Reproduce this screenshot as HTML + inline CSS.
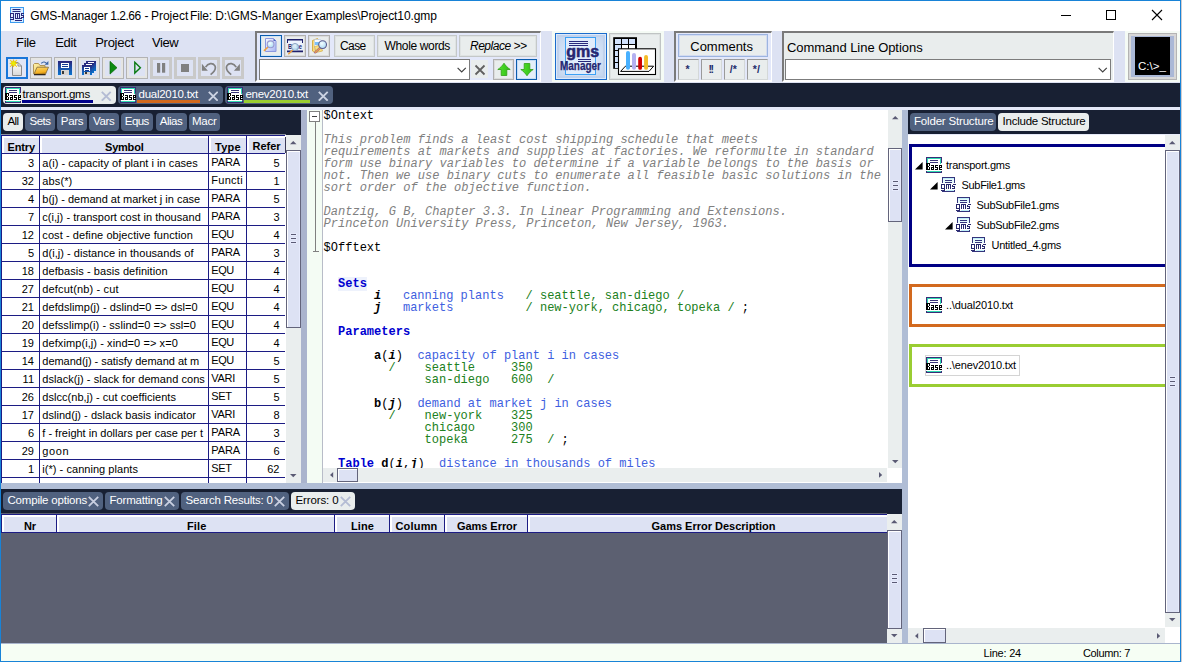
<!DOCTYPE html>
<html><head><meta charset="utf-8"><title>GMS-Manager</title>
<style>
*{box-sizing:border-box;margin:0;padding:0}
html,body{width:1182px;height:662px;overflow:hidden;background:#fff}
body{position:relative;font-family:"Liberation Sans",sans-serif;font-size:11px;color:#000}
.a{position:absolute}
.t{position:absolute;white-space:pre;line-height:1}
.btn{position:absolute;background:#e9eded;border:1px solid #c4c8c8;box-shadow:inset 0 0 0 1px #dfe3e3}
.sunk{position:absolute;background:#e9eded;border-top:2px solid #7a7a7a;border-left:2px solid #7a7a7a;border-right:1px solid #fff;border-bottom:2px solid #fff}
.tab{position:absolute;border-radius:4px;height:18px;background:#50617f;color:#fff;font-size:11px}
.tab.on{background:#e9eded;color:#000}
.hdr{position:absolute;background:#dde2f3;border-left:1px solid #fff;border-top:1px solid #fff;font-weight:bold;font-size:11px;text-align:center}
.mono{font-family:"Liberation Mono",monospace;font-size:12.02px;line-height:12px;white-space:pre;position:absolute;left:323.6px}
.c{color:#808080;font-style:italic;font-size:12.07px}
.k{color:#0000d0;font-weight:bold}
.kh{color:#0000d0;font-weight:bold;background:#eef2fc}
.d{color:#4060e0}
.g{color:#208020}
.i{font-weight:bold;font-style:italic}
.b{font-weight:bold}
</style></head>
<body>
<div class="a" style="left:0px;top:0px;width:1182px;height:662px;background:#fff;"></div>
<div class="t" style="left:30.3px;top:10.3px;font-size:12px;color:#000;letter-spacing:-0.127px;">GMS-Manager</div>
<div class="t" style="left:110.3px;top:10.3px;font-size:12px;color:#000;letter-spacing:-0.511px;">1.2.66</div>
<div class="t" style="left:144.4px;top:10.3px;font-size:12px;color:#000;letter-spacing:1.004px;">-</div>
<div class="t" style="left:151px;top:10.3px;font-size:12px;color:#000;letter-spacing:-0.021px;">Project</div>
<div class="t" style="left:190px;top:10.3px;font-size:12px;color:#000;letter-spacing:-0.174px;">File:</div>
<div class="t" style="left:215.2px;top:10.3px;font-size:12px;color:#000;letter-spacing:-0.012px;">D:\GMS-Manger</div>
<div class="t" style="left:305.3px;top:10.3px;font-size:12px;color:#000;letter-spacing:-0.086px;">Examples\Project10.gmp</div>
<div class="a" style="left:1px;top:31px;width:1179px;height:52px;background:#dde2f3;"></div>
<div class="a" style="left:1px;top:83px;width:1179px;height:24px;background:#182033;"></div>
<div class="a" style="left:1px;top:107px;width:1179px;height:3px;background:#e4e8f8;"></div>
<div class="a" style="left:1px;top:110px;width:300px;height:25px;background:#182033;"></div>
<div class="a" style="left:1px;top:643px;width:1179px;height:1px;background:#a9b5cd;"></div>
<div class="a" style="left:1px;top:644px;width:1179px;height:17px;background:#f6fef4;"></div>
<svg class="a" style="left:10px;top:7px" width="15" height="16" viewBox="0 0 15 16"><rect x="0.5" y="0.5" width="13" height="15" fill="#dcecff" stroke="#3c9cf0"/><path d="M2.5 2.5h8M2.5 4.5h8M5 11.5h7M5 13.5h7" stroke="#28287c" stroke-width="1"/><path d="M0 6h4v1h-4zM5 6h5v1h-5zM11 6h3v1h-3zM0 7h1v1h-1zM3 7h1v1h-1zM5 7h1v1h-1zM7 7h1v1h-1zM9 7h1v1h-1zM11 7h1v1h-1zM0 8h1v1h-1zM3 8h1v1h-1zM5 8h1v1h-1zM7 8h1v1h-1zM9 8h1v1h-1zM11 8h3v1h-3zM0 9h1v1h-1zM3 9h1v1h-1zM5 9h1v1h-1zM7 9h1v1h-1zM9 9h1v1h-1zM13 9h1v1h-1zM0 10h4v1h-4zM5 10h1v1h-1zM7 10h1v1h-1zM9 10h1v1h-1zM11 10h3v1h-3zM3 11h1v1h-1zM0 12h4v1h-4z" fill="#28287c" shape-rendering="crispEdges"/></svg>
<svg class="a" style="left:1055px;top:5px" width="115" height="22" viewBox="0 0 115 22" shape-rendering="crispEdges"><path d="M6 10.5h10" stroke="#000" stroke-width="1" fill="none"/><rect x="51.5" y="5.5" width="9" height="9" stroke="#000" stroke-width="1" fill="none"/><path d="M97 5l10 10M107 5l-10 10" stroke="#000" stroke-width="1.1" fill="none" shape-rendering="auto"/></svg>
<div class="t" style="left:16px;top:36px;font-size:13px;color:#000;letter-spacing:-0.312px;">File</div>
<div class="t" style="left:55.3px;top:36px;font-size:13px;color:#000;letter-spacing:-0.350px;">Edit</div>
<div class="t" style="left:95.2px;top:36px;font-size:13px;color:#000;letter-spacing:-0.266px;">Project</div>
<div class="t" style="left:152px;top:36px;font-size:13px;color:#000;letter-spacing:-0.436px;">View</div>
<div class="a" style="left:6px;top:57px;width:22px;height:22px;border:2px solid #1976d9;background:#e1e6f5"></div>
<div class="a" style="left:30px;top:57px;width:22px;height:22px;border:1px solid #b3b3b3;box-shadow:inset 0 0 0 2px #e5e5e3"></div>
<div class="a" style="left:54px;top:57px;width:22px;height:22px;border:1px solid #b3b3b3;box-shadow:inset 0 0 0 2px #e5e5e3"></div>
<div class="a" style="left:78px;top:57px;width:22px;height:22px;border:1px solid #b3b3b3;box-shadow:inset 0 0 0 2px #e5e5e3"></div>
<div class="a" style="left:102px;top:57px;width:22px;height:22px;border:1px solid #b3b3b3;box-shadow:inset 0 0 0 2px #e5e5e3"></div>
<div class="a" style="left:126px;top:57px;width:22px;height:22px;border:1px solid #b3b3b3;box-shadow:inset 0 0 0 2px #e5e5e3"></div>
<div class="a" style="left:150px;top:57px;width:22px;height:22px;border:3px solid #c9c9c9;box-shadow:inset 0 0 0 0 #ccc"></div>
<div class="a" style="left:174px;top:57px;width:22px;height:22px;border:3px solid #c9c9c9;box-shadow:inset 0 0 0 0 #ccc"></div>
<div class="a" style="left:198px;top:57px;width:22px;height:22px;border:3px solid #c9c9c9;box-shadow:inset 0 0 0 0 #ccc"></div>
<div class="a" style="left:222px;top:57px;width:22px;height:22px;border:3px solid #c9c9c9;box-shadow:inset 0 0 0 0 #ccc"></div>
<svg class="a" style="left:8px;top:59px" width="18" height="18" viewBox="0 0 18 18"><defs><linearGradient id="pg" x1="0" y1="0" x2="0" y2="1"><stop offset="0" stop-color="#fff"/><stop offset="1" stop-color="#d8d8d8"/></linearGradient></defs><path d="M4.5 3.5h5.5l3.5 3.5v9.5h-9z" fill="url(#pg)" stroke="#8c8c8c"/><path d="M10 3.5v3.5h3.5" fill="none" stroke="#8c8c8c"/><path d="M5.50 0.70L6.15 2.83L8.12 1.78L7.07 3.75L9.20 4.40L7.07 5.05L8.12 7.02L6.15 5.97L5.50 8.10L4.85 5.97L2.88 7.02L3.93 5.05L1.80 4.40L3.93 3.75L2.88 1.78L4.85 2.83z" fill="#e8f000" stroke="#f0c400" stroke-width=".7"/><circle cx="2.4" cy="1.3000000000000003" r=".55" fill="#f0c400"/><circle cx="8.6" cy="1.3000000000000003" r=".55" fill="#f0c400"/><circle cx="2.4" cy="7.5" r=".55" fill="#f0c400"/><circle cx="8.6" cy="7.5" r=".55" fill="#f0c400"/></svg>
<svg class="a" style="left:32px;top:59px" width="18" height="18" viewBox="0 0 18 18"><defs><linearGradient id="fo" x1="0" y1="0" x2=".3" y2="1"><stop offset="0" stop-color="#fcd870"/><stop offset=".8" stop-color="#f4b020"/><stop offset="1" stop-color="#c88810"/></linearGradient><linearGradient id="fb" x1="0" y1="0" x2="1" y2="1"><stop offset="0" stop-color="#fdf0a8"/><stop offset="1" stop-color="#f0c860"/></linearGradient></defs><path d="M1.5 15v-9.5l1-1h4l1.5 2h5v2.5" fill="url(#fb)" stroke="#b09458" stroke-width="1"/><path d="M2 15.2l3-7h11.5l-3 7z" fill="url(#fo)" stroke="#8c7440" stroke-width=".9"/><path d="M2 15.7h11.5" stroke="#1c1408" stroke-width="1.1"/><path d="M9.3 4.3c1.8-2 4.2-1.6 5.6 .6" fill="none" stroke="#3c64a4" stroke-width="1.2"/><path d="M12.6 5.8h3.8v-3.8z" fill="#3c64a4"/></svg>
<svg class="a" style="left:56px;top:59px" width="18" height="18" viewBox="0 0 18 18"><defs><linearGradient id="fl" x1="0" y1="0" x2="0" y2="1"><stop offset="0" stop-color="#2a2478"/><stop offset=".45" stop-color="#1c4ca4"/><stop offset="1" stop-color="#0a74cc"/></linearGradient></defs><g shape-rendering="crispEdges"><rect x="2" y="2" width="14" height="14" fill="url(#fl)"/><rect x="5" y="4" width="8" height="5" fill="#fff"/><rect x="6" y="5" width="6" height="1" fill="#143c94"/><rect x="6" y="7" width="6" height="1" fill="#143c94"/><rect x="5" y="11" width="8" height="5" fill="#d8d4d0"/><rect x="6" y="12" width="2" height="3" fill="#383838"/></g></svg>
<svg class="a" style="left:80px;top:59px" width="18" height="18" viewBox="0 0 18 18"><defs><linearGradient id="fl" x1="0" y1="0" x2="0" y2="1"><stop offset="0" stop-color="#2a2478"/><stop offset=".45" stop-color="#1c4ca4"/><stop offset="1" stop-color="#0a74cc"/></linearGradient></defs><g shape-rendering="crispEdges"><rect x="6" y="2" width="10" height="10" fill="url(#fl)"/><rect x="8" y="3" width="6" height="1" fill="#fff"/><rect x="4" y="4" width="10" height="10" fill="url(#fl)"/><rect x="6" y="5" width="6" height="1" fill="#fff"/><rect x="2" y="6" width="10" height="10" fill="url(#fl)"/><rect x="4" y="8" width="6" height="4" fill="#fff"/><rect x="5" y="9" width="4" height="1" fill="#143c94"/><rect x="5" y="11" width="4" height="1" fill="#143c94"/><rect x="4" y="13" width="6" height="3" fill="#d8d4d0"/><rect x="5" y="13" width="2" height="2" fill="#383838"/></g></svg>
<svg class="a" style="left:104px;top:59px" width="18" height="18" viewBox="0 0 18 18"><path d="M6 2.3l7 6.4-7 6.4z" fill="#0a8a14" stroke="#006000" stroke-width=".6"/></svg>
<svg class="a" style="left:128px;top:59px" width="18" height="18" viewBox="0 0 18 18"><path d="M6.8 3.3l5.6 5.4-5.6 5.4z" fill="none" stroke="#0a7a14" stroke-width="1.4"/></svg>
<svg class="a" style="left:152px;top:59px" width="18" height="18" viewBox="0 0 18 18"><rect x="5" y="4" width="3.2" height="9.7" fill="#808080"/><rect x="10" y="4" width="3.2" height="9.7" fill="#808080"/></svg>
<svg class="a" style="left:176px;top:59px" width="18" height="18" viewBox="0 0 18 18"><rect x="5" y="5" width="8" height="8" fill="#808080"/></svg>
<svg class="a" style="left:200px;top:59px" width="18" height="18" viewBox="0 0 18 18"><path d="M5.6 8.2C8 4 12.8 3.4 14.8 6.6c1.4 2.6 .2 5.6-4.2 9" fill="none" stroke="#808080" stroke-width="1.7"/><path d="M1.9 4.8v7h6z" fill="#808080"/></svg>
<svg class="a" style="left:224px;top:59px" width="18" height="18" viewBox="0 0 18 18"><path d="M12.2 8.2C9.8 4 5 3.4 3 6.6c-1.4 2.6-.2 5.6 4.2 9" fill="none" stroke="#808080" stroke-width="1.7"/><path d="M15.9 4.8v7h-6z" fill="#808080"/></svg>
<div class="sunk" style="left:255px;top:31px;width:286px;height:51px;background:#e3e8fa"></div>
<div class="a" style="left:471px;top:60px;width:17px;height:18px;background:#e9eded;"></div>
<div class="a" style="left:260px;top:35px;width:22px;height:22px;border:1px solid #0b5cad;background:#e9eded;box-shadow:inset 0 0 0 1px #cfe3f7"></div>
<div class="a" style="left:284px;top:35px;width:22px;height:22px;border:1px solid #b0b0b0;background:#e9eded;box-shadow:inset 0 0 0 1px #dcdcdc"></div>
<div class="a" style="left:308px;top:35px;width:22px;height:22px;border:1px solid #b0b0b0;background:#e9eded;box-shadow:inset 0 0 0 1px #dcdcdc"></div>
<svg class="a" style="left:262px;top:37px" width="18" height="18" viewBox="0 0 18 18"><defs><radialGradient id="ln" cx=".4" cy=".35" r=".7"><stop offset="0" stop-color="#f4feff"/><stop offset="1" stop-color="#a8d8f4"/></radialGradient><linearGradient id="pgb" x1="0" y1="0" x2="1" y2="1"><stop offset="0" stop-color="#f6f9ff"/><stop offset=".5" stop-color="#d4dcfc"/><stop offset="1" stop-color="#a4b0f0"/></linearGradient></defs><path d="M3.5 1.5h8l2.5 2.5v10.5h-10.5z" fill="url(#pgb)" stroke="#8c98e0" stroke-width="1"/><path d="M11.5 1.5v2.5h2.5z" fill="#5060c0"/><path d="M6 10l-3.6 3.4" stroke="#f0a040" stroke-width="1.6" stroke-linecap="round"/><circle cx="8.6" cy="7.3" r="3.4" fill="url(#ln)" stroke="#9a98d0" stroke-width="1.1"/></svg>
<svg class="a" style="left:286px;top:37px" width="18" height="18" viewBox="0 0 18 18"><rect x="1.5" y="2.5" width="15" height="12" fill="#eef4ff"/><path d="M1 2h16v1.4h-16zM1 13.6h16v1.6h-16zM1 2h1v4h-1zM16 2h1v4h-1z" fill="#20206c"/><text x="2" y="12" font-family="Liberation Sans" font-weight="bold" font-size="7.5" fill="#28286c" textLength="14" lengthAdjust="spacingAndGlyphs">Base</text><path d="M6.4 13.2l-3.6 3.6" stroke="#f0a040" stroke-width="1.6" stroke-linecap="round"/><circle cx="9" cy="10" r="3.5" fill="url(#ln)" stroke="#8aa0c0" stroke-width="1" fill-opacity=".9"/></svg>
<svg class="a" style="left:310px;top:37px" width="18" height="18" viewBox="0 0 18 18"><path d="M2.5 3.5l5-2l1 1.5v11l-4 1.5l-2-1.5z" fill="#f7dc7c" stroke="#d0a030" stroke-width=".8"/><path d="M4.5 2.5h6l1.5 1.5v8h-7.5z" fill="#f8fbff" stroke="#b0c4e8" stroke-width=".6"/><path d="M5 5h6v3h-6z" fill="#7cc0f8"/><path d="M4.5 9.5l6-1.5l2 6l-6.5 1.5z" fill="#f8e080" stroke="#d0a030" stroke-width=".6"/><path d="M9.6 11.4l-4.4 4" stroke="#9060a0" stroke-width="2.2" stroke-linecap="round"/><path d="M9.6 11.4l-4.2 3.8" stroke="#f0a040" stroke-width="1.3" stroke-linecap="round"/><circle cx="12.6" cy="7.6" r="3.9" fill="url(#ln)" stroke="#5c5c8c" stroke-width="1.1"/></svg>
<div class="btn" style="left:334px;top:35px;width:41px;height:22px"></div>
<div class="btn" style="left:377px;top:35px;width:80px;height:22px"></div>
<div class="btn" style="left:459px;top:35px;width:78px;height:22px"></div>
<div class="t" style="left:340px;top:40px;font-size:12px;color:#000;letter-spacing:-0.603px;">Case</div>
<div class="t" style="left:384.6px;top:40px;font-size:12px;color:#000;letter-spacing:-0.360px;">Whole words</div>
<div class="t" style="left:470px;top:40px;font-size:12px;color:#000;letter-spacing:-0.488px;font-style:italic;">Replace &gt;&gt;</div>
<div class="a" style="left:259px;top:59px;width:211px;height:21px;background:#fff;border:1px solid #7c7c7c"></div>
<svg class="a" style="left:456.6px;top:67px" width="10" height="7"><path d="M.6 .8l4.1 4.1 4.1-4.1" fill="none" stroke="#404040" stroke-width="1.15"/></svg>
<svg class="a" style="left:474px;top:64px" width="12" height="12"><path d="M1.5 1.5l9 9M10.5 1.5l-9 9" fill="none" stroke="#606060" stroke-width="1.8"/></svg>
<div class="a" style="left:493px;top:59px;width:21px;height:21px;border:1px solid #b0b0b0;background:#e9eded;box-shadow:inset 0 0 0 1px #dcdcdc"></div>
<div class="a" style="left:516px;top:59px;width:21px;height:21px;border:1px solid #0b5cad;background:#e4eef9;box-shadow:inset 0 0 0 1px #c4dcf6"></div>
<svg class="a" style="left:497px;top:62px" width="14" height="15"><defs><linearGradient id="ga" x1="0" y1="0" x2="1" y2="0"><stop offset="0" stop-color="#58e030"/><stop offset=".5" stop-color="#40d020"/><stop offset="1" stop-color="#34b818"/></linearGradient></defs><path d="M7 1.2c1.6 2.4 3.6 4.6 6.2 6.3h-3.4v6h-5.6v-6h-3.4c2.6-1.700 4.600-3.900 6.200-6.300z" fill="url(#ga)" stroke="#2ea014" stroke-width=".8"/></svg>
<svg class="a" style="left:520px;top:62px" width="14" height="15"><path d="M7 13.8c1.6-2.4 3.6-4.6 6.2-6.300h-3.400v-6h-5.600v6h-3.400c2.600 1.700 4.600 3.900 6.200 6.300z" fill="url(#ga)" stroke="#2ea014" stroke-width=".8"/></svg>
<div class="a" style="left:552px;top:31px;width:112px;height:51px;background:#f5fbf5;"></div>
<div class="a" style="left:555px;top:33px;width:52px;height:47px;border:1px solid #1a6ccc;background:#c6d8f0;box-shadow:inset 0 0 0 1px #dbe9fb, inset 0 0 0 3px #c0d2ec"></div>
<div class="a" style="left:559px;top:37px;width:44px;height:39px;background:radial-gradient(ellipse at center,#e4effd 0%,#d3e2f6 60%,#c3d5ee 100%)"></div>
<div class="a" style="left:565px;top:37px;width:31px;height:38px;border:1px solid #3ca0f4;background:#e0ecfb"></div>
<svg class="a" style="left:557px;top:35px" width="48" height="43" viewBox="0 0 48 43"><path d="M12 6.5h19M12 8.5h19M12 10.5h19M21 24.5h13M21 26.5h13" stroke="#28287c" stroke-width="1"/><text x="9.3" y="22" font-family="Liberation Sans" font-weight="bold" font-size="16" fill="#262670" stroke="#262670" stroke-width=".5" textLength="33" lengthAdjust="spacingAndGlyphs">gms</text><text x="3" y="34.6" font-family="Liberation Sans" font-weight="bold" font-size="12" fill="#262670" stroke="#262670" stroke-width=".25" textLength="41" lengthAdjust="spacingAndGlyphs">Manager</text></svg>
<div class="a" style="left:609px;top:33px;width:52px;height:47px;border:1px solid #c0c4c4;background:#e9eded;box-shadow:inset 0 0 0 1px #dde1e1"></div>
<svg class="a" style="left:611px;top:35px" width="48" height="43" viewBox="0 0 48 43"><rect x="2.2" y="2.2" width="23.8" height="31.6" fill="#000"/><rect x="4" y="4" width="6" height="5" fill="#d2e2fc"/><rect x="11" y="4" width="6" height="5" fill="#d2e2fc"/><rect x="18" y="4" width="6" height="5" fill="#d2e2fc"/><rect x="4" y="10" width="6" height="5" fill="#d2e2fc"/><rect x="11" y="10" width="6" height="5" fill="#fff"/><rect x="18" y="10" width="6" height="5" fill="#fff"/><rect x="4" y="16" width="6" height="5" fill="#d2e2fc"/><rect x="11" y="16" width="6" height="5" fill="#fff"/><rect x="18" y="16" width="6" height="5" fill="#fff"/><rect x="4" y="22" width="6" height="5" fill="#d2e2fc"/><rect x="11" y="22" width="6" height="5" fill="#fff"/><rect x="18" y="22" width="6" height="5" fill="#fff"/><rect x="4" y="28" width="6" height="5" fill="#d2e2fc"/><rect x="11" y="28" width="6" height="5" fill="#fff"/><rect x="18" y="28" width="6" height="5" fill="#fff"/><rect x="7.5" y="13.8" width="37" height="25.7" fill="#fff" stroke="#000" stroke-width="1.1"/><path d="M9.6 36.4h28.4l4.6-5.2h-28.2z" fill="#fff" stroke="#000" stroke-width="1"/><rect x="15" y="16" width="4" height="18.8" rx="2" fill="#48b0ff"/><rect x="21" y="18" width="4" height="16.8" rx="2" fill="#b4b0f0"/><rect x="27.2" y="21.8" width="3.8" height="13" rx="1.9" fill="#d00000"/><rect x="33.1" y="20" width="3.9" height="14.8" rx="1.9" fill="#f4bc28"/></svg>
<div class="sunk" style="left:674px;top:31px;width:98px;height:51px;background:#e3e8fa"></div>
<div class="a" style="left:678px;top:34px;width:90px;height:23px;background:#e9eded;border:1px solid #9cb4e0;box-shadow:inset 0 0 0 1px #d4dcf0"></div>
<div class="t" style="left:690.3px;top:40.1px;font-size:13px;color:#000;letter-spacing:-0.031px;">Comments</div>
<div class="a" style="left:678px;top:59px;width:21px;height:21px;background:#e9eded;border-top:1px solid #9a9a9a;border-left:1px solid #9a9a9a;border-right:1px solid #d4d8d8;border-bottom:1px solid #d4d8d8"></div>
<div class="a" style="left:701px;top:59px;width:21px;height:21px;background:#e9eded;border-top:1px solid #9a9a9a;border-left:1px solid #9a9a9a;border-right:1px solid #d4d8d8;border-bottom:1px solid #d4d8d8"></div>
<div class="a" style="left:724px;top:59px;width:21px;height:21px;background:#e9eded;border-top:1px solid #9a9a9a;border-left:1px solid #9a9a9a;border-right:1px solid #d4d8d8;border-bottom:1px solid #d4d8d8"></div>
<div class="a" style="left:747px;top:59px;width:21px;height:21px;background:#e9eded;border-top:1px solid #9a9a9a;border-left:1px solid #9a9a9a;border-right:1px solid #d4d8d8;border-bottom:1px solid #d4d8d8"></div>
<div class="t" style="left:685.4px;top:64px;font-size:10.5px;color:#000;font-weight:bold;color:#1c2c6c;letter-spacing:0px">*</div>
<div class="t" style="left:708.4px;top:64px;font-size:10.5px;color:#000;font-weight:bold;color:#1c2c6c;letter-spacing:-1.3px">!!</div>
<div class="t" style="left:729.8px;top:64px;font-size:10.5px;color:#000;font-weight:bold;color:#1c2c6c;letter-spacing:0px">/*</div>
<div class="t" style="left:752.8px;top:64px;font-size:10.5px;color:#000;font-weight:bold;color:#1c2c6c;letter-spacing:0px">*/</div>
<div class="sunk" style="left:782px;top:31px;width:332px;height:51px"></div>
<div class="t" style="left:787px;top:41px;font-size:13px;color:#000;letter-spacing:-0.049px;">Command Line Options</div>
<div class="a" style="left:785px;top:59px;width:326px;height:21px;background:#fff;border:1px solid #7c7c7c"></div>
<svg class="a" style="left:1097.6px;top:67px" width="10" height="7"><path d="M.6 .8l4.100 4.100 4.100-4.100" fill="none" stroke="#404040" stroke-width="1.15"/></svg>
<div class="a" style="left:1125px;top:31px;width:55px;height:51px;background:#f5fbf5;"></div>
<div class="a" style="left:1128px;top:33px;width:49px;height:47px;border:1px solid #b4b4b4;background:#e4e4e4;box-shadow:inset 0 0 0 2px #d8d8d8"></div>
<div class="a" style="left:1131px;top:36px;width:43px;height:41px;background:#aab8d6;"></div>
<div class="a" style="left:1135px;top:37px;width:35px;height:38px;background:#000;"></div>
<div class="t" style="left:1138px;top:60.5px;font-size:11.5px;color:#fff;">C:\&gt;_</div>
<svg width="0" height="0" style="position:absolute"><defs><symbol id="base" viewBox="0 0 16 16"><rect x="1" y="1" width="14" height="14" fill="#fff"/><path d="M0 0h16v6h-1v-5h-14v5h-1z" fill="#3a2c78"/><path d="M1 1h14v6h-1v-5h-12v5h-1z" fill="#2fd8b0"/><path d="M4 3h8v1h-8zM4 5h8v1h-8z" fill="#3a3478"/><path d="M0 6h4v1h-4zM0 7h2v1h-2zM3 7h1v1h-1zM0 8h2v1h-2zM3 8h1v1h-1zM5 8h3v1h-3zM9 8h3v1h-3zM13 8h3v1h-3zM0 9h3v1h-3zM7 9h1v1h-1zM9 9h1v1h-1zM13 9h1v1h-1zM15 9h1v1h-1zM0 10h2v1h-2zM3 10h1v1h-1zM5 10h3v1h-3zM9 10h3v1h-3zM13 10h3v1h-3zM0 11h2v1h-2zM3 11h1v1h-1zM5 11h1v1h-1zM7 11h1v1h-1zM11 11h1v1h-1zM13 11h1v1h-1zM0 12h4v1h-4zM5 12h3v1h-3zM9 12h3v1h-3zM13 12h3v1h-3z" fill="#000"/><path d="M1 14h14v1h-14z" fill="#2fd8b0"/><path d="M0 15h16v1h-16zM0 14h1v1h-1zM15 14h1v1h-1z" fill="#3a2c78"/></symbol><symbol id="gms" viewBox="0 0 16 16"><path d="M2 1h11v5h-11z" fill="#e8fafc"/><path d="M1 0h13v6h-1v-5h-11v5h-1z" fill="#34347c"/><path d="M2 1h11v1h-11z" fill="#bfeef8"/><path d="M4 3h7v1h-7zM4 5h7v1h-7z" fill="#34347c"/><path d="M0 7h4v1h-4zM5 7h5v1h-5zM12 7h3v1h-3zM0 8h1v1h-1zM3 8h1v1h-1zM5 8h1v1h-1zM7 8h1v1h-1zM9 8h1v1h-1zM11 8h1v1h-1zM0 9h1v1h-1zM3 9h1v1h-1zM5 9h1v1h-1zM7 9h1v1h-1zM9 9h1v1h-1zM11 9h3v1h-3zM0 10h1v1h-1zM3 10h1v1h-1zM5 10h1v1h-1zM7 10h1v1h-1zM9 10h1v1h-1zM13 10h1v1h-1zM0 11h4v1h-4zM5 11h1v1h-1zM7 11h1v1h-1zM9 11h1v1h-1zM11 11h3v1h-3zM3 12h1v1h-1zM0 13h4v1h-4z" fill="#28286c"/><path d="M5 13h8v1h-8z" fill="#bfeef8"/><path d="M1 15h13v-2h-1v1h-11v-1h-1z" fill="#34347c"/></symbol></defs></svg>
<div class="tab on" style="left:3px;top:86px;width:113px"></div>
<svg class="a" style="left:5px;top:87px" width="16" height="16" shape-rendering="crispEdges"><use href="#base"/></svg>
<div class="t" style="left:22.5px;top:89px;font-size:11.5px;color:#000;letter-spacing:-0.216px;">transport.gms</div>
<div class="a" style="left:22px;top:100px;width:71px;height:3px;background:#00008c;"></div>
<svg class="a" style="left:101px;top:90.5px" width="10.5" height="10.5"><path d="M.8 .8l8.9 8.9M9.7 .8l-8.9 8.9" fill="none" stroke="#b4bcd4" stroke-width="1.9"/></svg>
<div class="tab" style="left:118px;top:86px;width:104.5px"></div>
<svg class="a" style="left:120px;top:87px" width="16" height="16" shape-rendering="crispEdges"><use href="#base"/></svg>
<div class="t" style="left:138.5px;top:89px;font-size:11.5px;color:#fff;letter-spacing:-0.263px;">dual2010.txt</div>
<div class="a" style="left:137px;top:100px;width:63px;height:3px;background:#d2691e;"></div>
<svg class="a" style="left:207.5px;top:90.5px" width="10.5" height="10.5"><path d="M.8 .8l8.9 8.9M9.7 .8l-8.9 8.9" fill="none" stroke="#ccd3e3" stroke-width="1.9"/></svg>
<div class="tab" style="left:225px;top:86px;width:108px"></div>
<svg class="a" style="left:227px;top:87px" width="16" height="16" shape-rendering="crispEdges"><use href="#base"/></svg>
<div class="t" style="left:245.5px;top:89px;font-size:11.5px;color:#fff;letter-spacing:-0.280px;">enev2010.txt</div>
<div class="a" style="left:243.5px;top:100px;width:66.5px;height:3px;background:#9acd32;"></div>
<svg class="a" style="left:318px;top:90.5px" width="10.5" height="10.5"><path d="M.8 .8l8.9 8.9M9.7 .8l-8.9 8.9" fill="none" stroke="#ccd3e3" stroke-width="1.9"/></svg>
<div class="tab on" style="left:3px;top:113px;width:20px"></div>
<div class="t" style="left:7.4px;top:115.5px;font-size:11.5px;color:#000;letter-spacing:-0.527px;">All</div>
<div class="tab" style="left:25px;top:113px;width:30px"></div>
<div class="t" style="left:29.5px;top:115.5px;font-size:11.5px;color:#fff;letter-spacing:-0.503px;">Sets</div>
<div class="tab" style="left:57px;top:113px;width:30px"></div>
<div class="t" style="left:60.85px;top:115.5px;font-size:11.5px;color:#fff;letter-spacing:-0.336px;">Pars</div>
<div class="tab" style="left:89px;top:113px;width:29.5px"></div>
<div class="t" style="left:93.1px;top:115.5px;font-size:11.5px;color:#fff;letter-spacing:-0.373px;">Vars</div>
<div class="tab" style="left:120.5px;top:113px;width:32.5px"></div>
<div class="t" style="left:124.85px;top:115.5px;font-size:11.5px;color:#fff;letter-spacing:-0.603px;">Equs</div>
<div class="tab" style="left:155.5px;top:113px;width:31px"></div>
<div class="t" style="left:159.75px;top:115.5px;font-size:11.5px;color:#fff;letter-spacing:-0.485px;">Alias</div>
<div class="tab" style="left:188.5px;top:113px;width:31.5px"></div>
<div class="t" style="left:192.0px;top:115.5px;font-size:11.5px;color:#fff;letter-spacing:-0.264px;">Macr</div>
<div class="a" style="left:1px;top:134px;width:285px;height:1px;background:#8a90a0;"></div>
<div class="a" style="left:1px;top:135px;width:285px;height:348px;background:#fff;"></div>
<div class="a" style="left:1px;top:135px;width:284px;height:1px;background:#1c1c84;"></div>
<div class="hdr" style="left:2px;top:136px;width:37px;height:17px;border-left:2px solid #fff;border-top:2px solid #fff"></div>
<div class="hdr" style="left:40px;top:136px;width:168px;height:17px;border-left:2px solid #fff;border-top:2px solid #fff"></div>
<div class="hdr" style="left:209px;top:136px;width:37px;height:17px;border-left:2px solid #fff;border-top:2px solid #fff"></div>
<div class="hdr" style="left:247px;top:136px;width:38px;height:17px;border-left:2px solid #fff;border-top:2px solid #fff"></div>
<div class="t" style="left:7.5px;top:141.5px;font-size:11px;color:#000;letter-spacing:-0.124px;font-weight:bold;">Entry</div>
<div class="t" style="left:105px;top:141.5px;font-size:11px;color:#000;letter-spacing:-0.205px;font-weight:bold;">Symbol</div>
<div class="t" style="left:215px;top:141.5px;font-size:11px;color:#000;letter-spacing:0.286px;font-weight:bold;">Type</div>
<div class="t" style="left:252.5px;top:140.5px;font-size:11px;color:#000;letter-spacing:-0.025px;font-weight:bold;">Refer</div>
<div class="a" style="left:1px;top:153px;width:284px;height:1px;background:#1c1c84;"></div>
<div class="a" style="left:1px;top:171px;width:284px;height:1px;background:#1c1c84;"></div>
<div class="a" style="left:1px;top:189px;width:284px;height:1px;background:#1c1c84;"></div>
<div class="a" style="left:1px;top:207px;width:284px;height:1px;background:#1c1c84;"></div>
<div class="a" style="left:1px;top:225px;width:284px;height:1px;background:#1c1c84;"></div>
<div class="a" style="left:1px;top:243px;width:284px;height:1px;background:#1c1c84;"></div>
<div class="a" style="left:1px;top:261px;width:284px;height:1px;background:#1c1c84;"></div>
<div class="a" style="left:1px;top:279px;width:284px;height:1px;background:#1c1c84;"></div>
<div class="a" style="left:1px;top:297px;width:284px;height:1px;background:#1c1c84;"></div>
<div class="a" style="left:1px;top:315px;width:284px;height:1px;background:#1c1c84;"></div>
<div class="a" style="left:1px;top:333px;width:284px;height:1px;background:#1c1c84;"></div>
<div class="a" style="left:1px;top:351px;width:284px;height:1px;background:#1c1c84;"></div>
<div class="a" style="left:1px;top:369px;width:284px;height:1px;background:#1c1c84;"></div>
<div class="a" style="left:1px;top:387px;width:284px;height:1px;background:#1c1c84;"></div>
<div class="a" style="left:1px;top:405px;width:284px;height:1px;background:#1c1c84;"></div>
<div class="a" style="left:1px;top:423px;width:284px;height:1px;background:#1c1c84;"></div>
<div class="a" style="left:1px;top:441px;width:284px;height:1px;background:#1c1c84;"></div>
<div class="a" style="left:1px;top:459px;width:284px;height:1px;background:#1c1c84;"></div>
<div class="a" style="left:1px;top:477px;width:284px;height:1px;background:#1c1c84;"></div>
<div class="a" style="left:1px;top:135px;width:1px;height:348px;background:#1c1c84;"></div>
<div class="a" style="left:39px;top:135px;width:1px;height:348px;background:#1c1c84;"></div>
<div class="a" style="left:208px;top:135px;width:1px;height:348px;background:#1c1c84;"></div>
<div class="a" style="left:246px;top:135px;width:1px;height:348px;background:#1c1c84;"></div>
<div class="a" style="left:285px;top:137px;width:1px;height:16px;background:#3c3c58;"></div>
<div class="t" style="left:3px;top:158px;width:31px;text-align:right;font-size:11px">3</div>
<div class="t" style="left:42.3px;top:158px;font-size:11px;color:#000;letter-spacing:0.041px;">a(i) - capacity of plant i in cases</div>
<div class="t" style="left:211.3px;top:157px;font-size:11px;color:#000;letter-spacing:-0.135px;">PARA</div>
<div class="t" style="left:247px;top:158px;width:32.5px;text-align:right;font-size:11px">5</div>
<div class="t" style="left:3px;top:176px;width:31px;text-align:right;font-size:11px">32</div>
<div class="t" style="left:42.3px;top:176px;font-size:11px;color:#000;letter-spacing:0.126px;">abs(*)</div>
<div class="t" style="left:211.3px;top:175px;font-size:11px;color:#000;letter-spacing:0.274px;">Functi</div>
<div class="t" style="left:247px;top:176px;width:32.5px;text-align:right;font-size:11px">1</div>
<div class="t" style="left:3px;top:194px;width:31px;text-align:right;font-size:11px">4</div>
<div class="t" style="left:42.3px;top:194px;font-size:11px;color:#000;letter-spacing:0.005px;">b(j) - demand at market j in case</div>
<div class="t" style="left:211.3px;top:193px;font-size:11px;color:#000;letter-spacing:-0.135px;">PARA</div>
<div class="t" style="left:247px;top:194px;width:32.5px;text-align:right;font-size:11px">5</div>
<div class="t" style="left:3px;top:212px;width:31px;text-align:right;font-size:11px">7</div>
<div class="t" style="left:42.3px;top:212px;font-size:11px;color:#000;letter-spacing:0.039px;">c(i,j) - transport cost in thousand</div>
<div class="t" style="left:211.3px;top:211px;font-size:11px;color:#000;letter-spacing:-0.135px;">PARA</div>
<div class="t" style="left:247px;top:212px;width:32.5px;text-align:right;font-size:11px">3</div>
<div class="t" style="left:3px;top:230px;width:31px;text-align:right;font-size:11px">12</div>
<div class="t" style="left:42.3px;top:230px;font-size:11px;color:#000;letter-spacing:0.082px;">cost - define objective function</div>
<div class="t" style="left:211.3px;top:229px;font-size:11px;color:#000;letter-spacing:-0.479px;">EQU</div>
<div class="t" style="left:247px;top:230px;width:32.5px;text-align:right;font-size:11px">4</div>
<div class="t" style="left:3px;top:248px;width:31px;text-align:right;font-size:11px">5</div>
<div class="t" style="left:42.3px;top:248px;font-size:11px;color:#000;letter-spacing:0.042px;">d(i,j) - distance in thousands of</div>
<div class="t" style="left:211.3px;top:247px;font-size:11px;color:#000;letter-spacing:-0.135px;">PARA</div>
<div class="t" style="left:247px;top:248px;width:32.5px;text-align:right;font-size:11px">3</div>
<div class="t" style="left:3px;top:266px;width:31px;text-align:right;font-size:11px">18</div>
<div class="t" style="left:42.3px;top:266px;font-size:11px;color:#000;letter-spacing:0.066px;">defbasis - basis definition</div>
<div class="t" style="left:211.3px;top:265px;font-size:11px;color:#000;letter-spacing:-0.479px;">EQU</div>
<div class="t" style="left:247px;top:266px;width:32.5px;text-align:right;font-size:11px">4</div>
<div class="t" style="left:3px;top:284px;width:31px;text-align:right;font-size:11px">27</div>
<div class="t" style="left:42.3px;top:284px;font-size:11px;color:#000;letter-spacing:0.145px;">defcut(nb) - cut</div>
<div class="t" style="left:211.3px;top:283px;font-size:11px;color:#000;letter-spacing:-0.479px;">EQU</div>
<div class="t" style="left:247px;top:284px;width:32.5px;text-align:right;font-size:11px">4</div>
<div class="t" style="left:3px;top:302px;width:31px;text-align:right;font-size:11px">21</div>
<div class="t" style="left:42.3px;top:302px;font-size:11px;color:#000;letter-spacing:0.057px;">defdslimp(j) - dslind=0 =&gt; dsl=0</div>
<div class="t" style="left:211.3px;top:301px;font-size:11px;color:#000;letter-spacing:-0.479px;">EQU</div>
<div class="t" style="left:247px;top:302px;width:32.5px;text-align:right;font-size:11px">4</div>
<div class="t" style="left:3px;top:320px;width:31px;text-align:right;font-size:11px">20</div>
<div class="t" style="left:42.3px;top:320px;font-size:11px;color:#000;letter-spacing:0.065px;">defsslimp(i) - sslind=0 =&gt; ssl=0</div>
<div class="t" style="left:211.3px;top:319px;font-size:11px;color:#000;letter-spacing:-0.479px;">EQU</div>
<div class="t" style="left:247px;top:320px;width:32.5px;text-align:right;font-size:11px">4</div>
<div class="t" style="left:3px;top:338px;width:31px;text-align:right;font-size:11px">19</div>
<div class="t" style="left:42.3px;top:338px;font-size:11px;color:#000;letter-spacing:0.083px;">defximp(i,j) - xind=0 =&gt; x=0</div>
<div class="t" style="left:211.3px;top:337px;font-size:11px;color:#000;letter-spacing:-0.479px;">EQU</div>
<div class="t" style="left:247px;top:338px;width:32.5px;text-align:right;font-size:11px">4</div>
<div class="t" style="left:3px;top:356px;width:31px;text-align:right;font-size:11px">14</div>
<div class="t" style="left:42.3px;top:356px;font-size:11px;color:#000;letter-spacing:-0.027px;">demand(j) - satisfy demand at m</div>
<div class="t" style="left:211.3px;top:355px;font-size:11px;color:#000;letter-spacing:-0.479px;">EQU</div>
<div class="t" style="left:247px;top:356px;width:32.5px;text-align:right;font-size:11px">5</div>
<div class="t" style="left:3px;top:374px;width:31px;text-align:right;font-size:11px">11</div>
<div class="t" style="left:42.3px;top:374px;font-size:11px;color:#000;letter-spacing:0.055px;">dslack(j) - slack for demand cons</div>
<div class="t" style="left:211.3px;top:373px;font-size:11px;color:#000;letter-spacing:-0.314px;">VARI</div>
<div class="t" style="left:247px;top:374px;width:32.5px;text-align:right;font-size:11px">5</div>
<div class="t" style="left:3px;top:392px;width:31px;text-align:right;font-size:11px">26</div>
<div class="t" style="left:42.3px;top:392px;font-size:11px;color:#000;letter-spacing:0.041px;">dslcc(nb,j) - cut coefficients</div>
<div class="t" style="left:211.3px;top:391px;font-size:11px;color:#000;letter-spacing:-0.331px;">SET</div>
<div class="t" style="left:247px;top:392px;width:32.5px;text-align:right;font-size:11px">5</div>
<div class="t" style="left:3px;top:410px;width:31px;text-align:right;font-size:11px">17</div>
<div class="t" style="left:42.3px;top:410px;font-size:11px;color:#000;letter-spacing:0.025px;">dslind(j) - dslack basis indicator</div>
<div class="t" style="left:211.3px;top:409px;font-size:11px;color:#000;letter-spacing:-0.314px;">VARI</div>
<div class="t" style="left:247px;top:410px;width:32.5px;text-align:right;font-size:11px">8</div>
<div class="t" style="left:3px;top:428px;width:31px;text-align:right;font-size:11px">6</div>
<div class="t" style="left:42.3px;top:428px;font-size:11px;color:#000;letter-spacing:-0.003px;">f - freight in dollars per case per t</div>
<div class="t" style="left:211.3px;top:427px;font-size:11px;color:#000;letter-spacing:-0.135px;">PARA</div>
<div class="t" style="left:247px;top:428px;width:32.5px;text-align:right;font-size:11px">3</div>
<div class="t" style="left:3px;top:446px;width:31px;text-align:right;font-size:11px">29</div>
<div class="t" style="left:42.3px;top:446px;font-size:11px;color:#000;letter-spacing:0.582px;">goon</div>
<div class="t" style="left:211.3px;top:445px;font-size:11px;color:#000;letter-spacing:-0.135px;">PARA</div>
<div class="t" style="left:247px;top:446px;width:32.5px;text-align:right;font-size:11px">6</div>
<div class="t" style="left:3px;top:464px;width:31px;text-align:right;font-size:11px">1</div>
<div class="t" style="left:42.3px;top:464px;font-size:11px;color:#000;letter-spacing:0.044px;">i(*) - canning plants</div>
<div class="t" style="left:211.3px;top:463px;font-size:11px;color:#000;letter-spacing:-0.331px;">SET</div>
<div class="t" style="left:247px;top:464px;width:32.5px;text-align:right;font-size:11px">62</div>
<div class="a" style="left:286px;top:135px;width:15px;height:348px;background:#eaeeee;"></div>
<svg class="a" style="left:290.25px;top:141px" width="7" height="4"><path d="M0 3.2L3.25 0L6.5 3.2z" fill="#5a5a74"/></svg>
<svg class="a" style="left:290.25px;top:474px" width="7" height="4"><path d="M0 0L3.25 3.2L6.5 0z" fill="#5a5a74"/></svg>
<div class="a" style="left:286px;top:150px;width:15px;height:178px;background:#dde2f4;border:1px solid #63647b;box-shadow:inset 1px 1px 0 #fff, inset -1px 0 0 #e6eafc"></div>
<div class="a" style="left:290px;top:233px;width:7px;height:3px;background:#e6eafc;"></div>
<div class="a" style="left:291px;top:234px;width:5px;height:1px;background:#5a5a74;"></div>
<div class="a" style="left:290px;top:237px;width:7px;height:3px;background:#e6eafc;"></div>
<div class="a" style="left:291px;top:238px;width:5px;height:1px;background:#5a5a74;"></div>
<div class="a" style="left:290px;top:241px;width:7px;height:3px;background:#e6eafc;"></div>
<div class="a" style="left:291px;top:242px;width:5px;height:1px;background:#5a5a74;"></div>
<div class="a" style="left:301px;top:110px;width:6px;height:373px;background:#aab4cd;"></div>
<div class="a" style="left:307px;top:110px;width:15px;height:373px;background:#f4fcf4;"></div>
<div class="a" style="left:322px;top:110px;width:1px;height:373px;background:#b8bcc8;"></div>
<svg class="a" style="left:309px;top:111px" width="12" height="142" viewBox="0 0 12 142" shape-rendering="crispEdges"><rect x="0.5" y="0.5" width="10" height="10" fill="#fff" stroke="#808080"/><path d="M3 5.5h5" stroke="#404040"/><path d="M6.5 11v129.5M4 140.5h6" fill="none" stroke="#808080"/></svg>
<div class="mono" style="top:110px">$Ontext</div>
<div class="mono" style="top:134px"><span class="c">This problem finds a least cost shipping schedule that meets</span></div>
<div class="mono" style="top:146px"><span class="c">requirements at markets and supplies at factories. We reformulte in standard</span></div>
<div class="mono" style="top:158px"><span class="c">form use binary variables to determine if a variable belongs to the basis or</span></div>
<div class="mono" style="top:170px"><span class="c">not. Then we use binary cuts to enumerate all feasible basic solutions in the</span></div>
<div class="mono" style="top:182px"><span class="c">sort order of the objective function.</span></div>
<div class="mono" style="top:206px"><span class="c">Dantzig, G B, Chapter 3.3. In Linear Programming and Extensions.</span></div>
<div class="mono" style="top:218px"><span class="c">Princeton University Press, Princeton, New Jersey, 1963.</span></div>
<div class="mono" style="top:242px">$Offtext</div>
<div class="mono" style="top:278px">  <span class="kh">Sets</span></div>
<div class="mono" style="top:290px">       <span class="i">i</span>   <span class="d">canning plants</span>   <span class="g">/ seattle, san-diego /</span></div>
<div class="mono" style="top:302px">       <span class="i">j</span>   <span class="d">markets</span>          <span class="g">/ new-york, chicago, topeka /</span> ;</div>
<div class="mono" style="top:326px">  <span class="k">Parameters</span></div>
<div class="mono" style="top:350px">       <span class="b">a</span>(<span class="i">i</span>)  <span class="d">capacity of plant i in cases</span></div>
<div class="mono" style="top:362px">         <span class="g">/    seattle     350</span></div>
<div class="mono" style="top:374px">              <span class="g">san-diego   600  /</span></div>
<div class="mono" style="top:398px">       <span class="b">b</span>(<span class="i">j</span>)  <span class="d">demand at market j in cases</span></div>
<div class="mono" style="top:410px">         <span class="g">/    new-york    325</span></div>
<div class="mono" style="top:422px">              <span class="g">chicago     300</span></div>
<div class="mono" style="top:434px">              <span class="g">topeka      275  /</span> ;</div>
<div class="mono" style="top:458px">  <span class="k">Table</span> <span class="b">d</span>(<span class="i">i</span>,<span class="i">j</span>)  <span class="d">distance in thousands of miles</span></div>
<div class="a" style="left:887px;top:110px;width:15px;height:373px;background:#fff;"></div>
<div class="a" style="left:888px;top:110px;width:14px;height:358px;background:#eaeeee;"></div>
<svg class="a" style="left:891.75px;top:116px" width="7" height="4"><path d="M0 3.2L3.25 0L6.5 3.2z" fill="#5a5a74"/></svg>
<svg class="a" style="left:891.75px;top:460px" width="7" height="4"><path d="M0 0L3.25 3.2L6.5 0z" fill="#5a5a74"/></svg>
<div class="a" style="left:888px;top:148px;width:14px;height:74px;background:#dde2f4;border:1px solid #63647b;box-shadow:inset 1px 1px 0 #fff, inset -1px 0 0 #e6eafc"></div>
<div class="a" style="left:892px;top:180px;width:7px;height:3px;background:#e6eafc;"></div>
<div class="a" style="left:893px;top:181px;width:5px;height:1px;background:#5a5a74;"></div>
<div class="a" style="left:892px;top:184px;width:7px;height:3px;background:#e6eafc;"></div>
<div class="a" style="left:893px;top:185px;width:5px;height:1px;background:#5a5a74;"></div>
<div class="a" style="left:892px;top:188px;width:7px;height:3px;background:#e6eafc;"></div>
<div class="a" style="left:893px;top:189px;width:5px;height:1px;background:#5a5a74;"></div>
<div class="a" style="left:323px;top:468px;width:564px;height:14px;background:#eaeeee;"></div>
<svg class="a" style="left:329.5px;top:472.25px" width="4" height="7"><path d="M3.2 0L0 2.9L3.2 5.8z" fill="#5a5a74"/></svg>
<svg class="a" style="left:879px;top:472.25px" width="4" height="7"><path d="M0 0L3.2 2.9L0 5.8z" fill="#5a5a74"/></svg>
<div class="a" style="left:337px;top:468px;width:21px;height:14px;background:#dde2f4;border:1px solid #63647b;box-shadow:inset 1px 1px 0 #fff"></div>
<div class="a" style="left:404.5px;top:482px;width:3px;height:1px;background:#3c9c3c;"></div>
<div class="a" style="left:323px;top:482px;width:579px;height:1px;background:#fff;"></div>
<div class="a" style="left:902px;top:110px;width:6px;height:533px;background:#b0bdd5;"></div>
<div class="a" style="left:908px;top:110px;width:272px;height:24px;background:#182033;"></div>
<div class="tab" style="left:910px;top:113px;width:86px"></div>
<div class="tab on" style="left:998px;top:113px;width:91px"></div>
<div class="t" style="left:914px;top:116px;font-size:11.5px;color:#fff;letter-spacing:-0.184px;">Folder Structure</div>
<div class="t" style="left:1002.5px;top:116px;font-size:11.5px;color:#000;letter-spacing:-0.232px;">Include Structure</div>
<div class="a" style="left:908px;top:135px;width:272px;height:493px;background:#fff;"></div>
<div class="a" style="left:909px;top:144px;width:262px;height:123px;border:3px solid #000084"></div>
<div class="a" style="left:909px;top:284px;width:262px;height:43px;border:3px solid #d2691e"></div>
<div class="a" style="left:909px;top:344px;width:262px;height:43px;border:3px solid #9acd32"></div>
<svg class="a" style="left:915px;top:161.6px" width="8" height="8"><path d="M7.6 0v7.6h-7.6z" fill="#000"/></svg>
<svg class="a" style="left:926px;top:157px" width="16" height="16" shape-rendering="crispEdges"><use href="#base"/></svg>
<div class="t" style="left:946px;top:160px;font-size:11px;color:#000;letter-spacing:-0.250px;">transport.gms</div>
<svg class="a" style="left:930px;top:181.6px" width="8" height="8"><path d="M7.6 0v7.6h-7.6z" fill="#000"/></svg>
<svg class="a" style="left:941px;top:177px" width="16" height="16" shape-rendering="crispEdges"><use href="#gms"/></svg>
<div class="t" style="left:961.5px;top:180px;font-size:11px;color:#000;letter-spacing:-0.313px;">SubFile1.gms</div>
<svg class="a" style="left:956px;top:197px" width="16" height="16" shape-rendering="crispEdges"><use href="#gms"/></svg>
<div class="t" style="left:976.5px;top:200px;font-size:11px;color:#000;letter-spacing:-0.288px;">SubSubFile1.gms</div>
<svg class="a" style="left:945px;top:221.6px" width="8" height="8"><path d="M7.6 0v7.6h-7.6z" fill="#000"/></svg>
<svg class="a" style="left:956px;top:217px" width="16" height="16" shape-rendering="crispEdges"><use href="#gms"/></svg>
<div class="t" style="left:976.5px;top:220px;font-size:11px;color:#000;letter-spacing:-0.288px;">SubSubFile2.gms</div>
<svg class="a" style="left:971px;top:237px" width="16" height="16" shape-rendering="crispEdges"><use href="#gms"/></svg>
<div class="t" style="left:991.5px;top:240px;font-size:11px;color:#000;letter-spacing:-0.276px;">Untitled_4.gms</div>
<svg class="a" style="left:926px;top:297px" width="16" height="16" shape-rendering="crispEdges"><use href="#base"/></svg>
<div class="t" style="left:946px;top:300px;font-size:11px;color:#000;letter-spacing:-0.140px;">..\dual2010.txt</div>
<div class="a" style="left:925px;top:355px;width:95px;height:21px;border:1px solid #d4d4d4"></div>
<svg class="a" style="left:926px;top:357px" width="16" height="16" shape-rendering="crispEdges"><use href="#base"/></svg>
<div class="t" style="left:946px;top:360px;font-size:11px;color:#000;letter-spacing:-0.144px;">..\enev2010.txt</div>
<div class="a" style="left:908px;top:134px;width:272px;height:1px;background:#e6eaf8;"></div>
<div class="a" style="left:1165px;top:135px;width:15px;height:492px;background:#eaeeee;"></div>
<svg class="a" style="left:1169.25px;top:141px" width="7" height="4"><path d="M0 3.2L3.25 0L6.5 3.2z" fill="#5a5a74"/></svg>
<svg class="a" style="left:1169.25px;top:618px" width="7" height="4"><path d="M0 0L3.25 3.2L6.5 0z" fill="#5a5a74"/></svg>
<div class="a" style="left:1165px;top:150px;width:15px;height:463px;background:#dde2f4;border:1px solid #63647b;box-shadow:inset 1px 1px 0 #fff, inset -1px 0 0 #e6eafc"></div>
<div class="a" style="left:1169px;top:376px;width:7px;height:3px;background:#e6eafc;"></div>
<div class="a" style="left:1170px;top:377px;width:5px;height:1px;background:#5a5a74;"></div>
<div class="a" style="left:1169px;top:380px;width:7px;height:3px;background:#e6eafc;"></div>
<div class="a" style="left:1170px;top:381px;width:5px;height:1px;background:#5a5a74;"></div>
<div class="a" style="left:1169px;top:384px;width:7px;height:3px;background:#e6eafc;"></div>
<div class="a" style="left:1170px;top:385px;width:5px;height:1px;background:#5a5a74;"></div>
<div class="a" style="left:908px;top:628px;width:257px;height:15px;background:#eaeeee;"></div>
<svg class="a" style="left:914.5px;top:632.75px" width="4" height="7"><path d="M3.2 0L0 2.9L3.2 5.8z" fill="#5a5a74"/></svg>
<svg class="a" style="left:1157px;top:632.75px" width="4" height="7"><path d="M0 0L3.2 2.9L0 5.8z" fill="#5a5a74"/></svg>
<div class="a" style="left:923px;top:628px;width:23px;height:15px;background:#dde2f4;border:1px solid #63647b;box-shadow:inset 1px 1px 0 #fff"></div>
<div class="a" style="left:1165px;top:628px;width:15px;height:15px;background:#fff;"></div>
<div class="a" style="left:1px;top:483px;width:901px;height:6px;background:#b0bdd5;"></div>
<div class="a" style="left:1px;top:489px;width:901px;height:25px;background:#182033;"></div>
<div class="tab" style="left:3px;top:492px;width:100px"></div>
<div class="t" style="left:7.5px;top:495px;font-size:11.5px;color:#fff;letter-spacing:-0.197px;">Compile options</div>
<svg class="a" style="left:87.5px;top:496px" width="11" height="11"><path d="M.8 .8l9.4 9.4M10.2 .8l-9.4 9.4" fill="none" stroke="#c9cfe1" stroke-width="1.8"/></svg>
<div class="tab" style="left:105px;top:492px;width:74px"></div>
<div class="t" style="left:109.5px;top:495px;font-size:11.5px;color:#fff;letter-spacing:-0.196px;">Formatting</div>
<svg class="a" style="left:163.5px;top:496px" width="11" height="11"><path d="M.8 .8l9.4 9.4M10.2 .8l-9.4 9.4" fill="none" stroke="#c9cfe1" stroke-width="1.8"/></svg>
<div class="tab" style="left:181px;top:492px;width:108px"></div>
<div class="t" style="left:185.5px;top:495px;font-size:11.5px;color:#fff;letter-spacing:-0.210px;">Search Results: 0</div>
<svg class="a" style="left:273.5px;top:496px" width="11" height="11"><path d="M.8 .8l9.4 9.4M10.2 .8l-9.4 9.4" fill="none" stroke="#c9cfe1" stroke-width="1.8"/></svg>
<div class="tab on" style="left:291px;top:492px;width:64px"></div>
<div class="t" style="left:295.5px;top:495px;font-size:11.5px;color:#000;letter-spacing:-0.121px;">Errors: 0</div>
<svg class="a" style="left:339.5px;top:496px" width="11" height="11"><path d="M.8 .8l9.4 9.4M10.2 .8l-9.4 9.4" fill="none" stroke="#b4bcd4" stroke-width="1.8"/></svg>
<div class="a" style="left:1px;top:513px;width:886px;height:1px;background:#5a5e70;"></div>
<div class="a" style="left:1px;top:514px;width:886px;height:1px;background:#1c1c84;"></div>
<div class="a" style="left:1px;top:515px;width:886px;height:17px;background:#fff;"></div>
<div class="hdr" style="left:2px;top:515px;width:54px;height:17px;border-left:2px solid #fff;border-top:2px solid #fff"></div>
<div class="a" style="left:1px;top:514px;width:1px;height:18px;background:#1c1c84;"></div>
<div class="hdr" style="left:57px;top:515px;width:277px;height:17px;border-left:2px solid #fff;border-top:2px solid #fff"></div>
<div class="a" style="left:56px;top:514px;width:1px;height:18px;background:#1c1c84;"></div>
<div class="hdr" style="left:335px;top:515px;width:54px;height:17px;border-left:2px solid #fff;border-top:2px solid #fff"></div>
<div class="a" style="left:334px;top:514px;width:1px;height:18px;background:#1c1c84;"></div>
<div class="hdr" style="left:390px;top:515px;width:54px;height:17px;border-left:2px solid #fff;border-top:2px solid #fff"></div>
<div class="a" style="left:389px;top:514px;width:1px;height:18px;background:#1c1c84;"></div>
<div class="hdr" style="left:445px;top:515px;width:82px;height:17px;border-left:2px solid #fff;border-top:2px solid #fff"></div>
<div class="a" style="left:444px;top:514px;width:1px;height:18px;background:#1c1c84;"></div>
<div class="hdr" style="left:528px;top:515px;width:359px;height:17px;border-left:2px solid #fff;border-top:2px solid #fff"></div>
<div class="a" style="left:527px;top:514px;width:1px;height:18px;background:#1c1c84;"></div>
<div class="a" style="left:1px;top:532px;width:886px;height:1px;background:#1c1c84;"></div>
<div class="t" style="left:24.0px;top:520.5px;font-size:11px;color:#000;letter-spacing:-0.112px;font-weight:bold;">Nr</div>
<div class="t" style="left:187.0px;top:520.5px;font-size:11px;color:#000;letter-spacing:0.113px;font-weight:bold;">File</div>
<div class="t" style="left:351.0px;top:520.5px;font-size:11px;color:#000;letter-spacing:0.097px;font-weight:bold;">Line</div>
<div class="t" style="left:395.5px;top:520.5px;font-size:11px;color:#000;letter-spacing:0.177px;font-weight:bold;">Column</div>
<div class="t" style="left:457.0px;top:520.5px;font-size:11px;color:#000;letter-spacing:-0.053px;font-weight:bold;">Gams Error</div>
<div class="t" style="left:651.5px;top:520.5px;font-size:11px;color:#000;letter-spacing:-0.004px;font-weight:bold;">Gams Error Description</div>
<div class="a" style="left:1px;top:533px;width:886px;height:110px;background:#5c6071;"></div>
<div class="a" style="left:887px;top:514px;width:15px;height:129px;background:#eaeeee;"></div>
<svg class="a" style="left:891.25px;top:520px" width="7" height="4"><path d="M0 3.2L3.25 0L6.5 3.2z" fill="#5a5a74"/></svg>
<svg class="a" style="left:891.25px;top:634px" width="7" height="4"><path d="M0 0L3.25 3.2L6.5 0z" fill="#5a5a74"/></svg>
<div class="a" style="left:887px;top:530px;width:15px;height:99px;background:#dde2f4;border:1px solid #63647b;box-shadow:inset 1px 1px 0 #fff, inset -1px 0 0 #e6eafc"></div>
<div class="a" style="left:891px;top:573px;width:7px;height:3px;background:#e6eafc;"></div>
<div class="a" style="left:892px;top:574px;width:5px;height:1px;background:#5a5a74;"></div>
<div class="a" style="left:891px;top:577px;width:7px;height:3px;background:#e6eafc;"></div>
<div class="a" style="left:892px;top:578px;width:5px;height:1px;background:#5a5a74;"></div>
<div class="a" style="left:891px;top:581px;width:7px;height:3px;background:#e6eafc;"></div>
<div class="a" style="left:892px;top:582px;width:5px;height:1px;background:#5a5a74;"></div>
<div class="t" style="left:983.5px;top:647.5px;font-size:11px;color:#000;letter-spacing:-0.206px;">Line: 24</div>
<div class="t" style="left:1083px;top:647.5px;font-size:11px;color:#000;letter-spacing:-0.348px;">Column: 7</div>
<div class="a" style="left:0px;top:0px;width:1181px;height:1px;background:#1883d7;"></div>
<div class="a" style="left:0px;top:0px;width:1px;height:662px;background:#1883d7;"></div>
<div class="a" style="left:1180px;top:0px;width:1px;height:662px;background:#1883d7;"></div>
<div class="a" style="left:1181px;top:0px;width:1px;height:662px;background:#d3cccc;"></div>
<div class="a" style="left:0px;top:661px;width:1181px;height:1px;background:#1883d7;"></div>
</body></html>
